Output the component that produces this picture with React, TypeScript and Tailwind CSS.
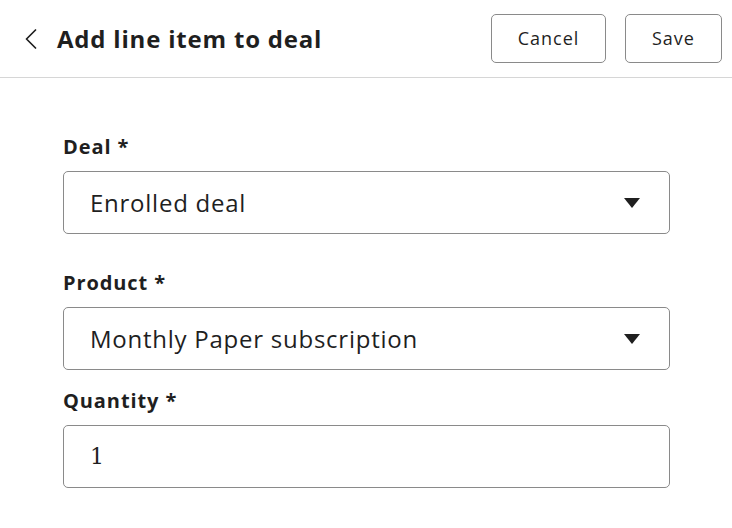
const Caret = () => (
  <svg width="16" height="10" viewBox="0 0 16 10" className="shrink-0">
    <path d="M0 0h16L8 10z" fill="#1f1f1f" />
  </svg>
);

const BackArrow = () => (
  <svg width="14" height="20" viewBox="0 0 14 20" fill="none" className="shrink-0">
    <path d="M11.5 1 2.5 10l9 9" stroke="#1f1f1f" strokeWidth="1.7" strokeLinecap="round" strokeLinejoin="round" />
  </svg>
);

const Label = ({ children }: { children: string }) => (
  <label className="block text-[20px] font-bold leading-6 tracking-[0.9px] text-[#1f1f1f]">
    {children} *
  </label>
);

const Select = ({ value }: { value: string }) => (
  <div className="mt-[12px] flex h-[63px] items-center justify-between rounded-[5px] border border-[#8a8a8a] pl-[26px] pr-[29px]">
    <span className="text-[24px] tracking-[0.75px] text-[#1f1f1f]">{value}</span>
    <Caret />
  </div>
);

export default function App() {
  return (
    <div className="h-[528px] w-[732px] bg-white font-['Open_Sans',sans-serif] text-[#1f1f1f]">
      <header className="flex h-[78px] items-center border-b border-[#d6d6d6] pl-[24px] pr-[10px]">
        <BackArrow />
        <h1 className="ml-[19px] text-[24px] font-bold tracking-[0.8px]">Add line item to deal</h1>
        <div className="ml-auto flex gap-[19px] tracking-[1px]">
          <button className="h-[49px] w-[115px] rounded-[5px] border border-[#8a8a8a] text-[18px]">
            Cancel
          </button>
          <button className="h-[49px] w-[97px] rounded-[5px] border border-[#8a8a8a] text-[18px]">
            Save
          </button>
        </div>
      </header>

      <main className="w-[670px] pl-[63px] pt-[57px]">
        <Label>Deal</Label>
        <Select value="Enrolled deal" />

        <div className="mt-[37px]">
          <Label>Product</Label>
          <Select value="Monthly Paper subscription" />
        </div>

        <div className="mt-[19px]">
          <Label>Quantity</Label>
          <input
            readOnly
            value="1"
            className="mt-[12px] block h-[63px] w-full rounded-[5px] border border-[#8a8a8a] pl-[26px] font-['DejaVu_Serif',serif] text-[22px] text-[#1f1f1f] outline-none"
          />
        </div>
      </main>
    </div>
  );
}
